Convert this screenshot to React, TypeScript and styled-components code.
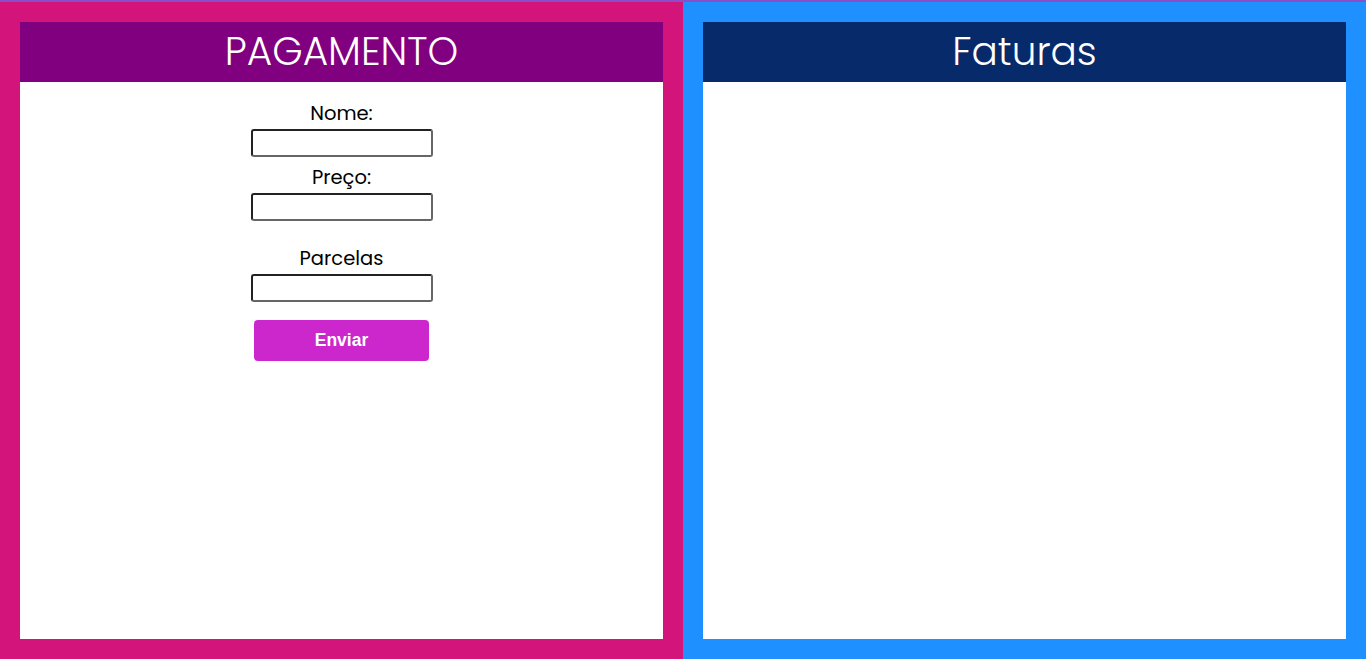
import styled, { createGlobalStyle } from "styled-components";

const GlobalStyle = createGlobalStyle`
  * { box-sizing: border-box; }
  html, body { margin: 0; padding: 0; }
  body {
    font-family: "Poppins", "Lato", "Noto Sans", sans-serif;
    border-top: 2px solid #8a4fc8;
    background: #1e90ff;
  }
`;

const Page = styled.div`
  display: grid;
  grid-template-columns: 683px 1fr;
  height: 657px;
`;

const Side = styled.section<{ $bg: string }>`
  background: ${(p) => p.$bg};
  padding: 20px;
  display: flex;
`;

const Card = styled.div`
  background: #fff;
  flex: 1;
  display: flex;
  flex-direction: column;
`;

const Header = styled.h1<{ $bg: string }>`
  margin: 0;
  height: 60px;
  background: ${(p) => p.$bg};
  color: #fff;
  font-weight: 300;
  font-size: 39px;
  line-height: 60px;
  text-align: center;
`;

const Form = styled.form`
  display: flex;
  flex-direction: column;
  align-items: center;
  padding-top: 14px;
`;

const Label = styled.label<{ $spaced?: boolean }>`
  display: block;
  font-size: 19.5px;
  line-height: 25px;
  padding-top: 5px;
  color: #000;
  margin-top: ${(p) => (p.$spaced ? "17px" : "0")};
`;

const Input = styled.input`
  width: 182px;
  height: 28px;
  margin: 3px 0;
  border: 2px solid #222;
  border-right-color: #666;
  border-bottom-color: #666;
  border-radius: 3px;
  background: #fff;
`;

const Button = styled.button`
  margin-top: 15px;
  width: 175px;
  height: 41px;
  border: none;
  border-radius: 4px;
  background: #cc27cc;
  color: #fff;
  font-family: "Liberation Sans", Arial, sans-serif;
  font-weight: 700;
  font-size: 17.5px;
  line-height: 39px;
  padding: 0;
`;

export default function App() {
  return (
    <>
      <GlobalStyle />
      <Page>
        <Side $bg="#d3147a">
          <Card>
            <Header $bg="#800080">PAGAMENTO</Header>
            <Form onSubmit={(e) => e.preventDefault()}>
              <Label htmlFor="nome">Nome:</Label>
              <Input id="nome" type="text" />
              <Label htmlFor="preco">Preço:</Label>
              <Input id="preco" type="text" />
              <Label htmlFor="parcelas" $spaced>
                Parcelas
              </Label>
              <Input id="parcelas" type="text" />
              <Button type="submit">Enviar</Button>
            </Form>
          </Card>
        </Side>
        <Side $bg="#1e90ff">
          <Card>
            <Header $bg="#072a6b">Faturas</Header>
          </Card>
        </Side>
      </Page>
    </>
  );
}
